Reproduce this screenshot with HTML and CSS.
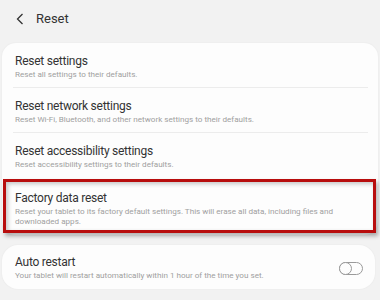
FILE: index.html
```html
<!DOCTYPE html>
<html>
<head>
<meta charset="utf-8">
<link rel="stylesheet" href="styles.css">
</head>
<body>
<div class="header">
  <svg class="back" width="8" height="12" viewBox="0 0 8 12"><path d="M6.5 1 L1.5 6 L6.5 11" fill="none" stroke="#333" stroke-width="1.3"/></svg>
  <span class="htitle">Reset</span>
</div>
<div class="card">
  <div class="row div">
    <div class="title">Reset settings</div>
    <div class="sub">Reset all settings to their defaults.</div>
  </div>
  <div class="row div">
    <div class="title">Reset network settings</div>
    <div class="sub">Reset Wi-Fi, Bluetooth, and other network settings to their defaults.</div>
  </div>
  <div class="row">
    <div class="title">Reset accessibility settings</div>
    <div class="sub">Reset accessibility settings to their defaults.</div>
  </div>
  <div class="row hl">
    <div class="title">Factory data reset</div>
    <div class="sub">Reset your tablet to its factory default settings. This will erase all data, including files and downloaded apps.</div>
  </div>
</div>
<div class="card card2">
  <div class="row toggle-row">
    <div class="text">
      <div class="title">Auto restart</div>
      <div class="sub">Your tablet will restart automatically within 1 hour of the time you set.</div>
    </div>
    <div class="toggle"><div class="knob"></div></div>
  </div>
</div>
</body>
</html>
```
FILE: styles.css
```css
html, body {
  margin: 0;
  padding: 0;
  background: #f2f2f2;
  font-family: Roboto, "Liberation Sans", sans-serif;
  width: 380px;
  height: 300px;
  overflow: hidden;
}
.header {
  height: 43px;
  display: flex;
  align-items: center;
  padding-left: 16px;
  box-sizing: border-box;
  padding-bottom: 6px;
}
.back {
  display: block;
}
.htitle {
  margin-left: 12px;
  font-size: 13px;
  color: #333;
}
.card {
  background: #fdfdfd;
  margin: 0 2px;
  border-radius: 14px;
  padding-bottom: 2px;
  box-shadow: 0 0 2px rgba(0,0,0,0.06);
}
.row {
  padding: 10px 12px 8px 13px;
  position: relative;
}
.row.div::after {
  content: "";
  position: absolute;
  left: 11px;
  right: 10px;
  bottom: 0;
  height: 1px;
  background: #ececec;
}
.title {
  font-size: 12px;
  line-height: 16px;
  letter-spacing: -0.25px;
  color: #333;
}
.sub {
  font-size: 8.1px;
  line-height: 11px;
  color: #a0a0a0;
}
.hl {
  margin: 1px 2px 0 1px;
  border: 3px solid #b80d0d;
  padding: 8px 30px 4px 9px;
  box-shadow: 2px 3px 4px rgba(0,0,0,0.3), inset 2px 2px 4px rgba(0,0,0,0.22);
}
.hl .sub {
  line-height: 10px;
}
.card2 {
  margin-top: 10px;
  margin-right: 5px;
  padding-bottom: 0;
  border-radius: 16px;
}
.toggle-row {
  display: flex;
  align-items: center;
  justify-content: space-between;
  padding: 9px 12px 8px 13px;
}
.toggle {
  width: 22px;
  height: 11px;
  border: 1px solid #9a9a9a;
  border-radius: 7px;
  position: relative;
  margin-top: 2px;
}
.knob {
  position: absolute;
  left: -1px;
  top: -1px;
  width: 11px;
  height: 11px;
  border: 1px solid #9a9a9a;
  border-radius: 50%;
  background: #fdfdfd;
}
```
